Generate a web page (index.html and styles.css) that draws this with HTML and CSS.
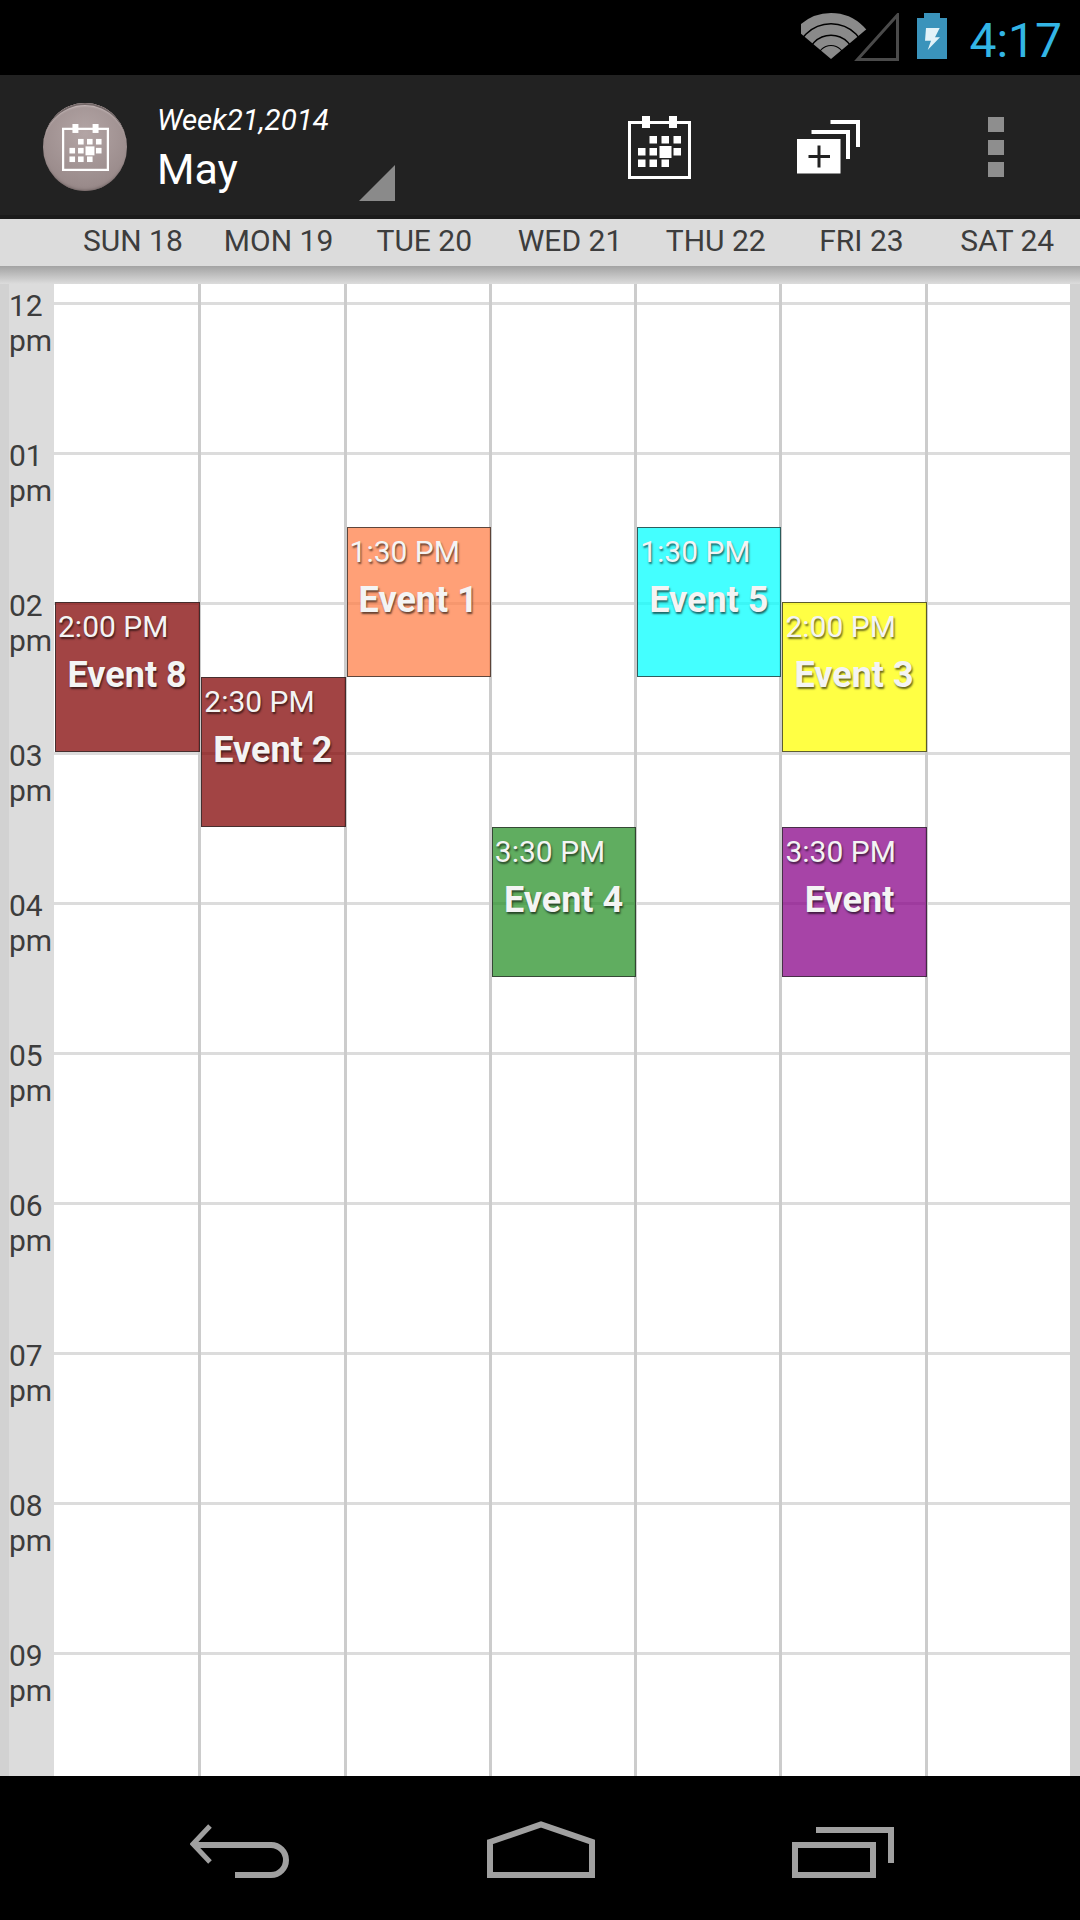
FILE: index.html
```html
<!DOCTYPE html>
<html>
<head>
    <meta name="viewport" content="width=device-width, initial-scale=1.0">
    <title>Week View</title>
    <link rel="stylesheet" href="styles.css">
</head>
<body>
    <svg class="defs" width="0" height="0">
        <defs>
            <symbol id="cal-icon" viewBox="0 0 63 63">
                <rect x="1.5" y="6.5" width="60" height="55" fill="none" stroke="currentColor" stroke-width="3"/>
                <g fill="currentColor">
                    <rect x="14" y="0" width="8" height="12"/>
                    <rect x="41" y="0" width="8" height="12"/>
                    <rect x="21.5" y="20" width="7.5" height="7.5"/>
                    <rect x="33.5" y="20" width="7.5" height="7.5"/>
                    <rect x="45.5" y="20" width="7.5" height="7.5"/>
                    <rect x="10" y="32" width="7.5" height="7.5"/>
                    <rect x="21.5" y="32" width="7.5" height="7.5"/>
                    <rect x="31.5" y="30" width="12" height="12"/>
                    <rect x="45.5" y="32" width="7.5" height="7.5"/>
                    <rect x="10" y="43.5" width="7.5" height="7.5"/>
                    <rect x="21.5" y="43.5" width="7.5" height="7.5"/>
                    <rect x="33.5" y="43.5" width="7.5" height="7.5"/>
                </g>
            </symbol>
            <clipPath id="wifi-clip">
                <polygon points="30,46 -9,13.3 -9,-4 69,-4 69,13.3"/>
            </clipPath>
        </defs>
    </svg>

    <div class="status-bar">
        <svg class="status-signal" width="98" height="48" viewBox="0 0 98 48">
            <g clip-path="url(#wifi-clip)" fill="none" stroke="#8a8a8a">
                <circle cx="30" cy="46" r="41" stroke-width="10"/>
                <circle cx="30" cy="46" r="29.5" stroke-width="10"/>
                <circle cx="30" cy="46" r="18.5" stroke-width="9"/>
                <circle cx="30" cy="46" r="6.5" stroke-width="13"/>
            </g>
            <polygon points="56.5,46.5 96.5,46.5 96.5,2" fill="none" stroke="#4a4a4a" stroke-width="3"/>
        </svg>
        <svg class="status-battery" width="30" height="46" viewBox="0 0 30 46">
            <path d="M7 0H23V5H30V46H0V5H7Z" fill="#3a93bb"/>
            <polygon points="9,15 22.7,15 18,24.3 23,24.3 10.7,37 14,27.7 8,27.7" fill="#e2f2f8"/>
        </svg>
        <span class="status-time">4:17</span>
    </div>

    <div class="action-bar">
        <div class="app-logo">
            <svg class="logo-icon" width="47" height="47"><use href="#cal-icon"/></svg>
        </div>
        <div class="title-block">
            <div class="title-week">Week21,2014</div>
            <div class="title-month">May</div>
            <div class="spinner-corner"></div>
        </div>
        <div class="actions">
            <svg class="action-icon" width="63" height="63"><use href="#cal-icon"/></svg>
            <svg class="action-icon add-icon" width="63" height="54" viewBox="0 0 63 54">
                <rect x="0" y="19" width="43.5" height="34.5" fill="#fff"/>
                <path d="M11.5 36.5H33M22 25.5V47.5" stroke="#222" stroke-width="3" fill="none"/>
                <path d="M14.5 12H51V39M33.5 2H61V27" stroke="#fff" stroke-width="4" fill="none"/>
            </svg>
            <div class="overflow-icon">
                <span></span>
                <span></span>
                <span></span>
            </div>
        </div>
    </div>

    <div class="day-header">
        <div>SUN 18</div>
        <div>MON 19</div>
        <div>TUE 20</div>
        <div>WED 21</div>
        <div>THU 22</div>
        <div>FRI 23</div>
        <div>SAT 24</div>
    </div>
    <div class="header-shadow"></div>

    <div class="calendar">
        <div class="hours">
            <div class="hour">12<br>pm</div>
            <div class="hour">01<br>pm</div>
            <div class="hour">02<br>pm</div>
            <div class="hour">03<br>pm</div>
            <div class="hour">04<br>pm</div>
            <div class="hour">05<br>pm</div>
            <div class="hour">06<br>pm</div>
            <div class="hour">07<br>pm</div>
            <div class="hour">08<br>pm</div>
            <div class="hour">09<br>pm</div>
        </div>
        <div class="week">
            <div class="day">
                <div class="event at-200 maroon">
                    <div class="event-time">2:00 PM</div>
                    <div class="event-title">Event 8</div>
                </div>
            </div>
            <div class="day">
                <div class="event at-230 maroon">
                    <div class="event-time">2:30 PM</div>
                    <div class="event-title">Event 2</div>
                </div>
            </div>
            <div class="day">
                <div class="event at-130 salmon">
                    <div class="event-time">1:30 PM</div>
                    <div class="event-title">Event 1</div>
                </div>
            </div>
            <div class="day">
                <div class="event at-330 green">
                    <div class="event-time">3:30 PM</div>
                    <div class="event-title">Event 4</div>
                </div>
            </div>
            <div class="day">
                <div class="event at-130 cyan">
                    <div class="event-time">1:30 PM</div>
                    <div class="event-title">Event 5</div>
                </div>
            </div>
            <div class="day">
                <div class="event at-200 yellow">
                    <div class="event-time">2:00 PM</div>
                    <div class="event-title">Event 3</div>
                </div>
                <div class="event at-330 purple">
                    <div class="event-time">3:30 PM</div>
                    <div class="event-title">Event&nbsp;</div>
                </div>
            </div>
            <div class="day"></div>
        </div>
    </div>

    <div class="nav-bar">
        <svg width="99" height="54" viewBox="0 0 99 54" fill="none" stroke="#a0a0a0" stroke-width="6">
            <path d="M81 21H5M45 51H81A15 15 0 0 0 81 21"/>
            <path d="M20 2L3 20L20 38" stroke-width="5"/>
        </svg>
        <svg width="108" height="57" viewBox="0 0 108 57" fill="none" stroke="#a0a0a0" stroke-width="6">
            <polygon points="3,21 54,3.5 105,21 105,54 3,54"/>
        </svg>
        <svg width="102" height="51" viewBox="0 0 102 51" fill="none" stroke="#a0a0a0" stroke-width="6">
            <rect x="3" y="18" width="78" height="30"/>
            <path d="M24 3H99V36"/>
        </svg>
    </div>
</body>
</html>
```

FILE: styles.css
```css
* {
    box-sizing: border-box;
}
body {
    margin: 0;
    width: 1080px;
    height: 1920px;
    overflow: hidden;
    display: flex;
    flex-direction: column;
    font-family: Roboto, "Liberation Sans", sans-serif;
    background-color: #000;
}
.defs {
    position: absolute;
}

/* status bar */
.status-bar {
    height: 75px;
    flex: none;
    display: flex;
    justify-content: flex-end;
    align-items: flex-start;
    padding: 13px 18px 0 0;
    background-color: #000;
}
.status-battery {
    margin-left: 18px;
}
.status-time {
    margin: -2px 0 0 22px;
    font-size: 48px;
    line-height: 60px;
    color: #33b5e5;
}

/* action bar */
.action-bar {
    height: 144px;
    flex: none;
    display: flex;
    align-items: center;
    padding: 4px 76px 0 43px;
    background-color: #222;
    border-bottom: 4px solid #1b1b1b;
}
.app-logo {
    width: 84px;
    height: 88px;
    flex: none;
    display: flex;
    align-items: center;
    justify-content: center;
    color: #fff;
    border-radius: 50%;
    background: radial-gradient(circle at 50% 35%, #b3a5a5, #998a8a 75%);
    box-shadow: inset 0 3px 0 -1px #746868, inset 0 5px 2px -2px #c8bcbc, inset 0 -3px 3px -2px #6d6060;
}
.title-block {
    position: relative;
    width: 238px;
    margin: 3px 0 0 30px;
    color: #fff;
}
.title-week {
    font-size: 29.5px;
    line-height: 36px;
    font-style: italic;
}
.title-month {
    margin-top: 6px;
    margin-bottom: 1px;
    font-size: 43px;
    line-height: 50px;
}
.spinner-corner {
    position: absolute;
    right: 0;
    bottom: -6px;
    width: 0;
    height: 0;
    border-style: solid;
    border-width: 0 0 36px 36px;
    border-color: transparent transparent #8a8a8a transparent;
}
.actions {
    margin-left: auto;
    display: flex;
    align-items: center;
    color: #fff;
}
.add-icon {
    margin-left: 106px;
}
.overflow-icon {
    margin-left: 128px;
    display: flex;
    flex-direction: column;
    gap: 7.5px;
}
.overflow-icon span {
    display: block;
    width: 16px;
    height: 15px;
    background-color: #8e8e8e;
}

/* day header */
.day-header {
    height: 47px;
    flex: none;
    display: grid;
    grid-template-columns: repeat(7, 1fr);
    padding: 0 0 3px 60px;
    font-size: 30px;
    line-height: 44px;
    text-align: center;
    color: #3d3d3d;
    background-color: #dcdcdc;
}
.header-shadow {
    height: 18px;
    flex: none;
    background: linear-gradient(#a3a3a3, #dcdcdc);
}

/* week grid */
.calendar {
    height: 1492px;
    flex: none;
    display: flex;
    overflow: hidden;
    background-color: #d2d2d2;
    padding: 0 10px 0 9px;
}
.hours {
    position: relative;
    z-index: 1;
    width: 45px;
    flex: none;
    padding: 4px 0 0 0;
    font-size: 30px;
    line-height: 35px;
    color: #3d3d3d;
    background-color: #dcdcdc;
}
.hour {
    height: 150px;
}
.week {
    flex: 1;
    margin-left: -1px;
    display: grid;
    grid-template-columns: repeat(7, 1fr);
    background-color: #fff;
    background-image: repeating-linear-gradient(#dcdcdc 0, #dcdcdc 3px, transparent 3px, transparent 150px);
    background-position: 0 18px;
}
.day {
    position: relative;
    background: linear-gradient(#ccc, #ccc) no-repeat 0 0 / 3px 100%;
}
.day:first-child {
    background: none;
}
.event {
    position: absolute;
    z-index: 1;
    left: 3px;
    right: -2px;
    height: 150px;
    padding: 6px 0 0 2px;
    color: #f4f4f4;
    border: 1px solid rgba(40, 40, 40, 0.75);
    text-shadow: 1px 2px 2px rgba(0, 0, 0, 0.6);
}
.day:first-child .event {
    left: 2px;
}
.event-time {
    font-size: 30px;
    line-height: 36px;
}
.event-title {
    margin: 8px 0 0 -3px;
    font-size: 36px;
    line-height: 44px;
    font-weight: bold;
    text-align: center;
}
.at-130 { top: 243px; }
.at-200 { top: 318px; }
.at-230 { top: 393px; }
.at-330 { top: 543px; }
.maroon { background-color: rgba(128, 0, 0, 0.733); }
.salmon { background-color: rgba(255, 126, 70, 0.733); }
.green { background-color: rgba(38, 143, 38, 0.733); }
.cyan { background-color: rgba(0, 255, 255, 0.733); }
.yellow { background-color: rgba(255, 255, 0, 0.733); }
.purple { background-color: rgba(135, 0, 135, 0.733); }

/* nav bar */
.nav-bar {
    flex: 1;
    display: flex;
    align-items: flex-end;
    gap: 197.5px;
    padding: 0 0 42px 190px;
    background-color: #000;
}
```
